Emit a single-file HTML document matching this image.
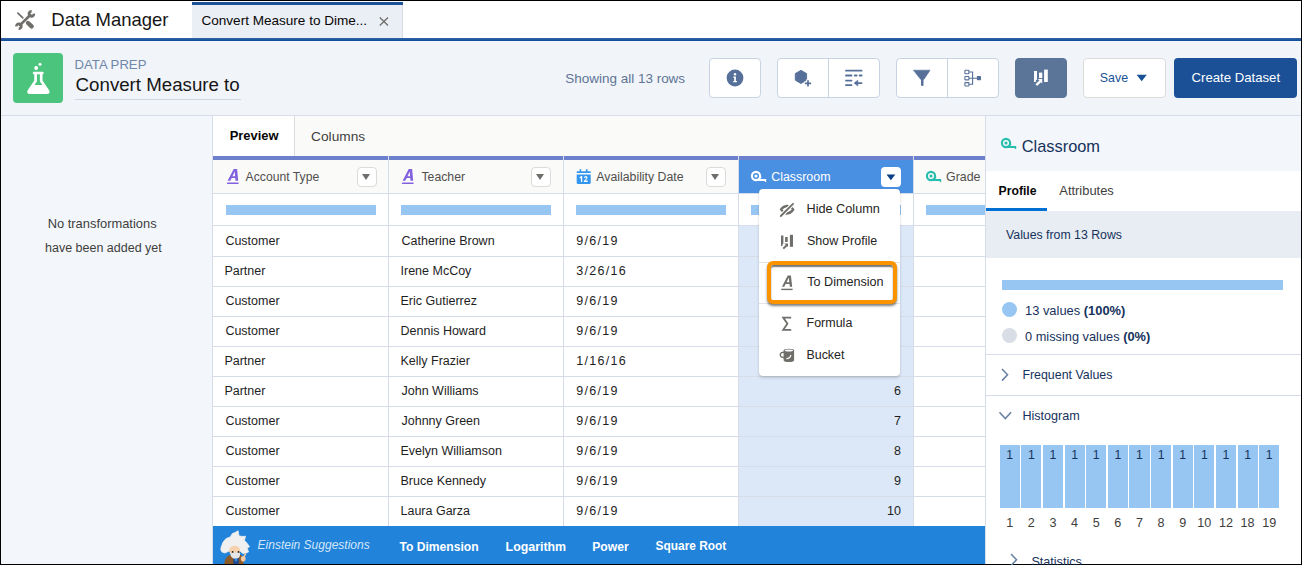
<!DOCTYPE html>
<html><head><meta charset="utf-8">
<style>
*{box-sizing:border-box;margin:0;padding:0}
html,body{width:1302px;height:565px;overflow:hidden;background:#000}
body{font-family:"Liberation Sans",sans-serif;position:relative}
.a{position:absolute}
.t{position:absolute;white-space:nowrap}
.btn{position:absolute;background:#fff;border:1px solid #c9d4e2;border-radius:4px}
.vl{position:absolute;width:1px;background:#d6dde8}
.hl{position:absolute;height:1px;background:#d6dde8}
.pbar{position:absolute;top:205px;height:10px;background:#97c6f2}
.dd{position:absolute;top:167px;width:20px;height:20px;background:#fff;border:1px solid #dddbda;border-radius:4px}
.dd:after{content:"";position:absolute;left:4px;top:6px;border-left:4.5px solid transparent;border-right:4.5px solid transparent;border-top:6px solid #706e6b}
.hb{position:absolute;top:445px;width:20.1px;height:63px;background:#97c6f2}
.hn{position:absolute;top:449px;width:20px;text-align:center;font-size:12.3px;line-height:12px;color:#16325c}
.hx{position:absolute;top:517px;width:24px;text-align:center;font-size:12.6px;line-height:12px;color:#3e3e3c}
svg{position:absolute;overflow:visible}
</style></head><body>
<div class="a" style="left:1px;top:1px;width:1300px;height:563px;background:#fff"></div>

<!-- top bar -->
<svg style="left:13px;top:8px" width="24" height="24" viewBox="0 0 24 24">
  <g stroke="#706e6b" fill="none" stroke-linecap="round">
    <line x1="4.9" y1="5.1" x2="9.8" y2="9.9" stroke-width="1.7"/>
    <line x1="15" y1="15" x2="18.6" y2="18.4" stroke-width="4.4"/>
    <line x1="7" y1="17.1" x2="17.3" y2="7" stroke-width="2.6"/>
    <path d="M20.89 5.68 A2.5 2.5 0 1 1 18.62 3.41" stroke-width="2.6" stroke-linecap="butt"/>
    <path d="M3.41 18.42 A2.5 2.5 0 1 1 5.68 20.69" stroke-width="2.6" stroke-linecap="butt"/>
  </g>
</svg>
<div class="a" style="left:192px;top:2px;width:211px;height:36px;background:#eaeef5;border-right:1px solid #d9dde3"></div>
<div class="a" style="left:192px;top:2px;width:211px;height:3px;background:#1b5297"></div>
<svg style="left:379px;top:17px" width="10" height="9" viewBox="0 0 10 9">
  <g stroke="#706e6b" stroke-width="1.3"><line x1="0.8" y1="0.5" x2="9" y2="8.5"/><line x1="9" y1="0.5" x2="0.8" y2="8.5"/></g>
</svg>
<div class="a" style="left:1px;top:38px;width:1300px;height:3px;background:linear-gradient(#3566a6,#0c4c97)"></div>

<!-- header -->
<div class="a" style="left:1px;top:41px;width:1300px;height:74px;background:#f1f4f9"></div>
<div class="hl" style="left:1px;top:115px;width:1300px;background:#d6dde8"></div>
<div class="a" style="left:13px;top:53px;width:50px;height:50px;background:#4bc47d;border-radius:4px"></div>
<svg style="left:13px;top:53px" width="50" height="50" viewBox="0 0 50 50">
  <circle cx="27" cy="11.3" r="1.5" fill="#fff"/>
  <circle cx="23.2" cy="15" r="2" fill="#fff"/>
  <rect x="19.8" y="18.8" width="10.8" height="2.4" rx="1" fill="#fff"/>
  <path d="M22.6 20.5 V28 L15.8 38 Q15 39.6 16.8 39.6 H34 Q35.8 39.6 35 38 L28.2 28 V20.5" fill="none" stroke="#fff" stroke-width="2.7" stroke-linejoin="round"/>
  <path d="M19.6 32 H31.2 L35 38 Q35.8 39.6 34 39.6 H16.8 Q15 39.6 15.8 38 Z" fill="#fff"/>
</svg>
<div class="hl" style="left:75px;top:99px;width:166px;background:#cfd6e0"></div>

<div class="btn" style="left:709px;top:58px;width:52px;height:40px"></div>
<svg style="left:726px;top:69px" width="18" height="18" viewBox="0 0 18 18">
  <circle cx="9" cy="9" r="8.4" fill="#56709a"/>
  <circle cx="9" cy="5.3" r="1.2" fill="#fff"/>
  <path d="M7.3 7.5 H9.9 V11.9 H10.9 V13.2 H7.2 V11.9 H8.2 V8.8 H7.3 Z" fill="#fff"/>
</svg>
<div class="btn" style="left:777px;top:58px;width:103px;height:40px"></div>
<div class="vl" style="left:828px;top:59px;height:38px;background:#c9d4e2"></div>
<svg style="left:790px;top:66px" width="26" height="24" viewBox="0 0 26 24">
  <path d="M10.95 4.3 L16.6 7.6 V14.2 L10.95 17.5 L5.3 14.2 V7.6 Z" fill="#56709a" stroke="#56709a" stroke-width="0.9" stroke-linejoin="round"/>
  <path d="M18 13.6 V21.2 M14.2 17.4 H21.8" stroke="#fff" stroke-width="3.6"/>
  <path d="M18 14.3 V20.5 M14.9 17.4 H21.1" stroke="#56709a" stroke-width="1.7"/>
</svg>
<svg style="left:844px;top:68px" width="20" height="20" viewBox="0 0 20 20">
  <g stroke="#56709a" stroke-width="1.8" stroke-linecap="round">
    <line x1="2" y1="2.7" x2="17.6" y2="2.7"/>
    <line x1="2" y1="7.5" x2="7.5" y2="7.5"/>
    <line x1="10.8" y1="7.5" x2="12.6" y2="7.5"/>
    <line x1="15.6" y1="7.5" x2="17.6" y2="7.5"/>
    <line x1="2" y1="12.6" x2="7.5" y2="12.6"/>
    <line x1="2" y1="17.2" x2="7.5" y2="17.2"/>
    <line x1="12" y1="15.1" x2="17.6" y2="15.1"/>
  </g>
  <path d="M10.1 15.1 L13.8 12.2 V18 Z" fill="#56709a" stroke="#56709a" stroke-width="0.6" stroke-linejoin="round"/>
</svg>
<div class="btn" style="left:896px;top:58px;width:103px;height:40px"></div>
<div class="vl" style="left:947px;top:59px;height:38px;background:#c9d4e2"></div>
<svg style="left:912px;top:69px" width="20" height="18" viewBox="0 0 20 18">
  <path d="M1.4 1.2 H18.1 L12.2 10 V10 H8.4 Z" fill="#56709a" stroke="#56709a" stroke-width="0.6" stroke-linejoin="round"/>
  <rect x="8.4" y="9" width="3.6" height="1.5" fill="#56709a"/>
  <rect x="9" y="9.5" width="2.5" height="7.3" fill="#56709a"/>
</svg>
<svg style="left:962px;top:68px" width="22" height="20" viewBox="0 0 22 20">
  <g fill="none" stroke="#56709a" stroke-width="1.1">
    <rect x="2.9" y="2.3" width="4" height="3.4" rx="0.5"/>
    <rect x="2.9" y="8.5" width="4" height="3.4" rx="0.5"/>
    <rect x="2.9" y="14.6" width="4" height="3.4" rx="0.5"/>
    <path d="M6.9 4 H10.6 V16.3 H6.9 M6.9 10.2 H15"/>
  </g>
  <rect x="14.9" y="8" width="4.1" height="4.2" rx="0.4" fill="#56709a"/>
</svg>
<div class="btn" style="left:1015px;top:58px;width:52px;height:40px;background:#5a7598;border-color:#5a7598"></div>
<svg style="left:1028px;top:65px" width="26" height="26" viewBox="0 0 26 26">
  <g fill="#fff">
    <path d="M6 6 H9 V14.5 L7.6 15.5 L8.3 16.2 L7.3 17 H6 Z"/>
    <rect x="11" y="7.6" width="3.3" height="5.5"/>
    <rect x="16.1" y="4.6" width="3.7" height="12.4"/>
  </g>
  <g stroke="#fff" stroke-width="2.4" fill="none"><line x1="8.3" y1="20.2" x2="12.4" y2="16.2"/></g>
  <path d="M9.8 14 L14.2 14 L14.2 18.4 Z" fill="#fff"/>
</svg>
<div class="btn" style="left:1083px;top:58px;width:83px;height:40px;border-color:#dddbda"></div>
<svg style="left:1136px;top:74px" width="12" height="8" viewBox="0 0 12 8"><path d="M0.6 0.8 H10.8 L5.7 7.3 Z" fill="#1b5297"/></svg>
<div class="a" style="left:1174px;top:58px;width:123px;height:40px;background:#1b5096;border-radius:4px"></div>

<!-- left panel -->
<div class="a" style="left:1px;top:116px;width:211px;height:448px;background:#f3f6fa"></div>
<div class="vl" style="left:212px;top:116px;height:448px"></div>

<!-- center -->
<div class="a" style="left:213px;top:116px;width:772px;height:40px;background:#fafaf9"></div>
<div class="a" style="left:213px;top:116px;width:81px;height:40px;background:#fff"></div>
<div class="vl" style="left:294px;top:116px;height:40px;background:#dddbda"></div>
<div class="a" style="left:213px;top:156px;width:772px;height:4px;background:#6c80cc"></div>
<div class="a" style="left:213px;top:160px;width:772px;height:33px;background:#fafaf9"></div>
<div class="a" style="left:739px;top:160px;width:174px;height:33px;background:#4a90e2"></div>
<div class="hl" style="left:213px;top:193px;width:772px"></div>
<!-- classroom column body -->
<div class="a" style="left:739px;top:226px;width:174px;height:300px;background:#dce8f8"></div>
<!-- row lines -->
<div class="hl" style="left:213px;top:225px;width:772px"></div>
<div class="hl" style="left:213px;top:256px;width:772px"></div>
<div class="hl" style="left:213px;top:286px;width:772px"></div>
<div class="hl" style="left:213px;top:316px;width:772px"></div>
<div class="hl" style="left:213px;top:346px;width:772px"></div>
<div class="hl" style="left:213px;top:376px;width:772px"></div>
<div class="hl" style="left:213px;top:406px;width:772px"></div>
<div class="hl" style="left:213px;top:436px;width:772px"></div>
<div class="hl" style="left:213px;top:466px;width:772px"></div>
<div class="hl" style="left:213px;top:496px;width:772px"></div>
<!-- column separators -->
<div class="vl" style="left:388px;top:156px;height:370px"></div>
<div class="vl" style="left:563px;top:156px;height:370px"></div>
<div class="vl" style="left:738px;top:156px;height:370px"></div>
<div class="vl" style="left:913px;top:156px;height:370px"></div>
<!-- profile bars -->
<div class="pbar" style="left:226px;width:150px"></div>
<div class="pbar" style="left:401px;width:150px"></div>
<div class="pbar" style="left:576px;width:150px"></div>
<div class="pbar" style="left:751px;width:150px"></div>
<div class="pbar" style="left:926px;width:59px"></div>
<!-- dropdown buttons -->
<div class="dd" style="left:357px"></div>
<div class="dd" style="left:531px"></div>
<div class="dd" style="left:706px"></div>
<div class="a" style="left:881px;top:167px;width:20px;height:20px;background:#fff;border-radius:4px"></div>
<svg style="left:886px;top:174px" width="10" height="7" viewBox="0 0 10 7"><path d="M0.5 0.5 H9.3 L4.9 6.2 Z" fill="#0b3f85"/></svg>
<!-- header icons -->
<svg style="left:222px;top:165px" width="20" height="23" viewBox="0 0 20 23">
  <path d="M5.6 15.8 L11.7 3.9 H15.1 L16.2 15.8 H13.5 L13.25 12.9 H9.7 L8.3 15.8 Z M10.5 11.2 H13.1 L12.7 6.6 Z" fill="#8261df" fill-rule="evenodd"/>
  <rect x="4.9" y="17.4" width="11.8" height="1.5" rx="0.6" fill="#8261df"/>
</svg>
<svg style="left:397px;top:165px" width="20" height="23" viewBox="0 0 20 23">
  <path d="M5.6 15.8 L11.7 3.9 H15.1 L16.2 15.8 H13.5 L13.25 12.9 H9.7 L8.3 15.8 Z M10.5 11.2 H13.1 L12.7 6.6 Z" fill="#8261df" fill-rule="evenodd"/>
  <rect x="4.9" y="17.4" width="11.8" height="1.5" rx="0.6" fill="#8261df"/>
</svg>
<svg style="left:572px;top:164px" width="24" height="24" viewBox="0 0 24 24">
  <g fill="#3396ee">
    <rect x="4.7" y="7.2" width="14" height="1.8" rx="0.5"/>
    <rect x="7.6" y="5.2" width="1.6" height="3"/>
    <rect x="13.9" y="5.2" width="1.6" height="3"/>
    <path d="M4.7 10.6 H18.7 V18.8 Q18.7 20 17.5 20 H5.9 Q4.7 20 4.7 18.8 Z"/>
  </g>
  <g fill="#fff">
    <path d="M7.5 13.3 L9.3 12.1 H10.2 V18 H8.9 V13.9 L8 14.4 Z"/>
    <path d="M11.9 13.8 Q12.2 12 13.8 12 Q15.5 12 15.5 13.7 Q15.5 14.8 13.9 16.1 L13.4 16.6 H15.6 V18 H11.8 V16.9 L13.5 15.3 Q14.2 14.6 14.2 13.9 Q14.2 13.3 13.7 13.3 Q13.2 13.3 13.1 14.1 Z"/>
  </g>
</svg>
<svg style="left:745px;top:165px" width="25" height="23" viewBox="0 0 25 23">
  <circle cx="11" cy="11" r="4.1" fill="none" stroke="#fff" stroke-width="2.1"/>
  <circle cx="11" cy="11" r="1.55" fill="#fff"/>
  <path d="M14.6 9.2 Q16.5 10.5 16.2 12.2 L15 14.2 Z" fill="#fff"/>
  <path d="M11 13.9 H21.2 V16.9 H19.8 V15.9 H11 Z" fill="#fff"/>
</svg>
<svg style="left:920px;top:165px" width="25" height="23" viewBox="0 0 25 23">
  <circle cx="11" cy="11" r="4.1" fill="none" stroke="#26bdae" stroke-width="2.1"/>
  <circle cx="11" cy="11" r="1.55" fill="#26bdae"/>
  <path d="M14.6 9.2 Q16.5 10.5 16.2 12.2 L15 14.2 Z" fill="#26bdae"/>
  <path d="M11 13.9 H21.2 V16.9 H19.8 V15.9 H11 Z" fill="#26bdae"/>
</svg>

<!-- einstein bar -->
<div class="a" style="left:213px;top:526px;width:772px;height:38px;background:#2183d9"></div>
<svg style="left:218px;top:528px" width="34" height="36" viewBox="0 0 34 36">
  <path d="M2.8 21.5 Q3 18.5 4 17 Q4.5 14.5 6 13 Q7 11 8.5 10.5 Q10.5 9.2 12.5 9 Q13 7 14.5 5.5 Q17 4.8 20.1 2.8 Q20.6 5.5 21 8 Q23 8.2 25 8.5 Q26.3 8.2 27.5 8.3 Q26.8 10.5 26.5 12.5 Q29.5 15.5 31.5 18.7 Q30 19.5 29 20 Q30 22 30.5 24 Q28 25 25 25.6 L22 23 H11 L7 25 Q5.5 24.5 4 24 Q3 22.5 2.8 21.5 Z" fill="#f0f0f0" stroke="#f0f0f0" stroke-width="0.8" stroke-linejoin="round"/>
  <path d="M6.3 36 Q6.8 28.5 12 27 L23 27 Q25.6 28.5 25.6 36 Z" fill="#8b5a2b"/>
  <rect x="15.3" y="29" width="5.5" height="7" fill="#1d4c94"/>
  <ellipse cx="16.6" cy="22.6" rx="5.6" ry="4.8" fill="#f6d1ad"/>
  <path d="M12.3 25 Q17 23.6 22.2 25 Q22.4 30.8 17.4 30.8 Q12.6 30.8 12.3 25 Z" fill="#e6e6e6"/>
  <rect x="17.3" y="30.2" width="1.6" height="3" fill="#4aa6ec"/>
  <circle cx="14.6" cy="23.9" r="0.95" fill="#222"/><circle cx="20.5" cy="23.9" r="0.95" fill="#222"/>
  <ellipse cx="25.2" cy="30.8" rx="2.4" ry="2.8" fill="#f6caa0"/>
  <path d="M25.8 29 L27.6 25.8" stroke="#f6caa0" stroke-width="1.5" stroke-linecap="round"/>
</svg>

<!-- popup -->
<div class="a" style="left:759px;top:189px;width:141px;height:187px;background:#fff;border-radius:4px;box-shadow:0 2px 3px rgba(0,0,0,.16),0 0 1px rgba(0,0,0,.15)"></div>
<div class="hl" style="left:759px;top:262px;width:141px;background:#e5e5e5"></div>
<div class="hl" style="left:759px;top:303px;width:141px;background:#e5e5e5"></div>
<div class="a" style="left:767px;top:261px;width:130px;height:43px;border:4px solid #fb9300;border-radius:6px;box-shadow:inset 0 2px 1.5px rgba(0,0,0,.55),0 2px 2.5px rgba(0,0,0,.5);background:#fff"></div>
<svg style="left:775px;top:198px" width="25" height="24" viewBox="0 0 25 24">
  <g fill="none" stroke="#706e6b" stroke-linecap="round">
    <path d="M12.8 8 Q8.4 8 6.1 11.5 Q6.8 12.7 8.1 13.5" stroke-width="2.3"/>
    <path d="M10.9 15.5 Q15.6 15.5 18.2 11.5 Q17.5 10.4 16.4 9.6" stroke-width="2.3"/>
    <line x1="5.8" y1="18" x2="18" y2="5.8" stroke-width="4" stroke="#fff"/><line x1="5.8" y1="18" x2="18" y2="5.8" stroke-width="1.8"/>
  </g>
</svg>
<svg style="left:775px;top:230px" width="25" height="24" viewBox="0 0 25 24">
  <g fill="#706e6b">
    <path d="M6 5.6 H8.4 V13.5 L7.3 14.3 L7.9 15 L7.1 15.9 H6 Z"/>
    <rect x="10.1" y="7" width="2.6" height="5"/>
    <rect x="14.9" y="4.8" width="3.1" height="12"/>
  </g>
  <line x1="8.3" y1="18.6" x2="11.7" y2="15.2" stroke="#706e6b" stroke-width="2"/>
  <path d="M9.4 13.4 L13 13.4 L13 17 Z" fill="#706e6b"/>
</svg>
<svg style="left:775px;top:270px" width="22" height="24" viewBox="0 0 22 24">
  <path d="M7 16.8 L12.7 5.4 H15.9 L17.2 16.8 H14.8 L14.5 14.1 H10.6 L9.3 16.8 Z M11.6 12.2 H14.3 L13.8 7.4 Z" fill="#706e6b" fill-rule="evenodd"/>
  <rect x="6.2" y="18.7" width="11.4" height="1.4" fill="#706e6b"/>
</svg>
<svg style="left:775px;top:312px" width="22" height="22" viewBox="0 0 22 22">
  <path d="M16.2 5.6 H8.2 L12.4 11.7 L8.2 17.8 H16.2" fill="none" stroke="#706e6b" stroke-width="1.8" stroke-linejoin="miter"/>
</svg>
<svg style="left:775px;top:345px" width="22" height="20" viewBox="0 0 22 20">
  <path d="M8.6 5.4 Q8.6 3.7 13.85 3.7 Q19.1 3.7 19.1 5.4 V15.3 Q19.1 17.1 13.85 17.1 Q8.6 17.1 8.6 15.3 Z" fill="#706e6b"/>
  <ellipse cx="13.85" cy="5.5" rx="4.1" ry="1.1" fill="#fff"/>
  <path d="M10.4 7.3 Q5.1 6.6 5.3 10 Q5.6 13.2 10.5 12.4 L12.8 11.6" fill="none" stroke="#706e6b" stroke-width="1.4"/>
  <path d="M11.3 13.8 Q15 13.6 16 10" fill="none" stroke="#fff" stroke-width="1.1"/>
</svg>

<!-- right panel -->
<div class="vl" style="left:985px;top:116px;height:448px"></div>
<div class="a" style="left:986px;top:116px;width:315px;height:55px;background:#f3f6fa"></div>
<svg style="left:995px;top:132px" width="25" height="23" viewBox="0 0 25 23">
  <circle cx="11" cy="11" r="4.1" fill="none" stroke="#26bdae" stroke-width="2.1"/>
  <circle cx="11" cy="11" r="1.55" fill="#26bdae"/>
  <path d="M14.6 9.2 Q16.5 10.5 16.2 12.2 L15 14.2 Z" fill="#26bdae"/>
  <path d="M11 13.9 H21.2 V16.9 H19.8 V15.9 H11 Z" fill="#26bdae"/>
</svg>
<div class="a" style="left:986px;top:171px;width:315px;height:40px;background:#fff"></div>
<div class="a" style="left:986px;top:208px;width:61px;height:3px;background:#0070d2"></div>
<div class="a" style="left:986px;top:211px;width:315px;height:47px;background:#e8edf3"></div>
<div class="a" style="left:1002px;top:280px;width:281px;height:10px;background:#97c6f2"></div>
<div class="a" style="left:1002px;top:302px;width:15px;height:15px;border-radius:50%;background:#97c6f2"></div>
<div class="a" style="left:1002px;top:328px;width:15px;height:15px;border-radius:50%;background:#d8dde6"></div>
<div class="t" style="left:1025px;top:304px;font-size:12.9px;line-height:14px;color:#16325c">13 values <b>(100%)</b></div>
<div class="t" style="left:1025px;top:330px;font-size:12.8px;line-height:14px;color:#16325c">0 missing values <b>(0%)</b></div>
<div class="hl" style="left:986px;top:354px;width:315px"></div>
<div class="hl" style="left:986px;top:395px;width:315px"></div>
<svg style="left:998px;top:366px" width="14" height="18" viewBox="0 0 14 18"><path d="M4 3 L9.5 8.8 L4 14.6" fill="none" stroke="#6b83a6" stroke-width="1.6"/></svg>
<svg style="left:998px;top:408px" width="16" height="14" viewBox="0 0 16 14"><path d="M1.5 4.3 L7.3 10.6 L13.1 4.3" fill="none" stroke="#6b83a6" stroke-width="1.6"/></svg>
<svg style="left:1008px;top:551px" width="14" height="18" viewBox="0 0 14 18"><path d="M3 3 L8.5 8.8 L3 14.6" fill="none" stroke="#6b83a6" stroke-width="1.6"/></svg>
<div class="hb" style="left:999.70px"></div>
<div class="hn" style="left:999.75px">1</div>
<div class="hx" style="left:997.75px">1</div>
<div class="hb" style="left:1021.32px"></div>
<div class="hn" style="left:1021.37px">1</div>
<div class="hx" style="left:1019.37px">2</div>
<div class="hb" style="left:1042.94px"></div>
<div class="hn" style="left:1042.99px">1</div>
<div class="hx" style="left:1040.99px">3</div>
<div class="hb" style="left:1064.56px"></div>
<div class="hn" style="left:1064.61px">1</div>
<div class="hx" style="left:1062.61px">4</div>
<div class="hb" style="left:1086.18px"></div>
<div class="hn" style="left:1086.23px">1</div>
<div class="hx" style="left:1084.23px">5</div>
<div class="hb" style="left:1107.80px"></div>
<div class="hn" style="left:1107.85px">1</div>
<div class="hx" style="left:1105.85px">6</div>
<div class="hb" style="left:1129.42px"></div>
<div class="hn" style="left:1129.47px">1</div>
<div class="hx" style="left:1127.47px">7</div>
<div class="hb" style="left:1151.04px"></div>
<div class="hn" style="left:1151.09px">1</div>
<div class="hx" style="left:1149.09px">8</div>
<div class="hb" style="left:1172.66px"></div>
<div class="hn" style="left:1172.71px">1</div>
<div class="hx" style="left:1170.71px">9</div>
<div class="hb" style="left:1194.28px"></div>
<div class="hn" style="left:1194.33px">1</div>
<div class="hx" style="left:1192.33px">10</div>
<div class="hb" style="left:1215.90px"></div>
<div class="hn" style="left:1215.95px">1</div>
<div class="hx" style="left:1213.95px">12</div>
<div class="hb" style="left:1237.52px"></div>
<div class="hn" style="left:1237.57px">1</div>
<div class="hx" style="left:1235.57px">18</div>
<div class="hb" style="left:1259.14px"></div>
<div class="hn" style="left:1259.19px">1</div>
<div class="hx" style="left:1257.19px">19</div>

<div class="t" style="left:51.30px;top:10.73px;font-size:18.5px;line-height:18.5px;color:#161616">Data Manager</div>
<div class="t" style="left:201.50px;top:14.32px;font-size:13.56px;line-height:13.56px;color:#080707">Convert Measure to Dime...</div>
<div class="t" style="left:74.60px;top:58.46px;font-size:13.15px;line-height:13.15px;color:#6f87a8">DATA PREP</div>
<div class="t" style="left:75.60px;top:75.76px;font-size:18.7px;line-height:18.7px;color:#161616">Convert Measure to</div>
<div class="t" style="left:565.30px;top:72.09px;font-size:13.48px;line-height:13.48px;color:#607595">Showing all 13 rows</div>
<div class="t" style="left:1099.80px;top:72.00px;font-size:12.4px;line-height:12.4px;color:#1b5297">Save</div>
<div class="t" style="left:1191.50px;top:71.44px;font-size:13.18px;line-height:13.18px;color:#ffffff">Create Dataset</div>
<div class="t" style="left:47.70px;top:217.58px;font-size:12.9px;line-height:12.9px;color:#3e3e3c">No transformations</div>
<div class="t" style="left:45.00px;top:241.91px;font-size:12.5px;line-height:12.5px;color:#3e3e3c">have been added yet</div>
<div class="t" style="left:229.70px;top:130.13px;font-size:12.95px;line-height:12.95px;color:#080707;font-weight:bold">Preview</div>
<div class="t" style="left:311.10px;top:129.50px;font-size:13.7px;line-height:13.7px;color:#3e3e3c">Columns</div>
<div class="t" style="left:245.60px;top:171.17px;font-size:12.2px;line-height:12.2px;color:#514f4d">Account Type</div>
<div class="t" style="left:421.50px;top:171.12px;font-size:12.26px;line-height:12.26px;color:#514f4d">Teacher</div>
<div class="t" style="left:596.30px;top:171.08px;font-size:12.3px;line-height:12.3px;color:#514f4d">Availability Date</div>
<div class="t" style="left:771.20px;top:171.19px;font-size:12.41px;line-height:12.41px;color:#ffffff">Classroom</div>
<div class="t" style="left:946.00px;top:171.20px;font-size:12.4px;line-height:12.4px;color:#514f4d">Grade</div>
<div class="t" style="left:225.40px;top:235.11px;font-size:12.5px;line-height:12.5px;color:#1e1e1e">Customer</div>
<div class="t" style="left:401.50px;top:235.11px;font-size:12.5px;line-height:12.5px;color:#1e1e1e">Catherine Brown</div>
<div class="t" style="left:576.30px;top:235.11px;font-size:12.5px;line-height:12.5px;color:#1e1e1e;letter-spacing:1.3px">9/6/19</div>
<div class="t" style="left:224.40px;top:265.12px;font-size:12.5px;line-height:12.5px;color:#1e1e1e">Partner</div>
<div class="t" style="left:400.50px;top:265.12px;font-size:12.5px;line-height:12.5px;color:#1e1e1e">Irene McCoy</div>
<div class="t" style="left:576.30px;top:265.12px;font-size:12.5px;line-height:12.5px;color:#1e1e1e;letter-spacing:1.3px">3/26/16</div>
<div class="t" style="left:225.40px;top:295.12px;font-size:12.5px;line-height:12.5px;color:#1e1e1e">Customer</div>
<div class="t" style="left:400.50px;top:295.12px;font-size:12.5px;line-height:12.5px;color:#1e1e1e">Eric Gutierrez</div>
<div class="t" style="left:576.30px;top:295.12px;font-size:12.5px;line-height:12.5px;color:#1e1e1e;letter-spacing:1.3px">9/6/19</div>
<div class="t" style="left:225.40px;top:325.12px;font-size:12.5px;line-height:12.5px;color:#1e1e1e">Customer</div>
<div class="t" style="left:400.50px;top:325.12px;font-size:12.5px;line-height:12.5px;color:#1e1e1e">Dennis Howard</div>
<div class="t" style="left:576.30px;top:325.12px;font-size:12.5px;line-height:12.5px;color:#1e1e1e;letter-spacing:1.3px">9/6/19</div>
<div class="t" style="left:224.40px;top:355.12px;font-size:12.5px;line-height:12.5px;color:#1e1e1e">Partner</div>
<div class="t" style="left:400.50px;top:355.12px;font-size:12.5px;line-height:12.5px;color:#1e1e1e">Kelly Frazier</div>
<div class="t" style="left:576.30px;top:355.12px;font-size:12.5px;line-height:12.5px;color:#1e1e1e;letter-spacing:1.3px">1/16/16</div>
<div class="t" style="left:224.40px;top:385.12px;font-size:12.5px;line-height:12.5px;color:#1e1e1e">Partner</div>
<div class="t" style="left:401.50px;top:385.12px;font-size:12.5px;line-height:12.5px;color:#1e1e1e">John Williams</div>
<div class="t" style="left:576.30px;top:385.12px;font-size:12.5px;line-height:12.5px;color:#1e1e1e;letter-spacing:1.3px">9/6/19</div>
<div class="t" style="left:225.40px;top:415.12px;font-size:12.5px;line-height:12.5px;color:#1e1e1e">Customer</div>
<div class="t" style="left:401.50px;top:415.12px;font-size:12.5px;line-height:12.5px;color:#1e1e1e">Johnny Green</div>
<div class="t" style="left:576.30px;top:415.12px;font-size:12.5px;line-height:12.5px;color:#1e1e1e;letter-spacing:1.3px">9/6/19</div>
<div class="t" style="left:225.40px;top:445.12px;font-size:12.5px;line-height:12.5px;color:#1e1e1e">Customer</div>
<div class="t" style="left:400.50px;top:445.12px;font-size:12.5px;line-height:12.5px;color:#1e1e1e">Evelyn Williamson</div>
<div class="t" style="left:576.30px;top:445.12px;font-size:12.5px;line-height:12.5px;color:#1e1e1e;letter-spacing:1.3px">9/6/19</div>
<div class="t" style="left:225.40px;top:475.12px;font-size:12.5px;line-height:12.5px;color:#1e1e1e">Customer</div>
<div class="t" style="left:400.50px;top:475.12px;font-size:12.5px;line-height:12.5px;color:#1e1e1e">Bruce Kennedy</div>
<div class="t" style="left:576.30px;top:475.12px;font-size:12.5px;line-height:12.5px;color:#1e1e1e;letter-spacing:1.3px">9/6/19</div>
<div class="t" style="left:225.40px;top:505.12px;font-size:12.5px;line-height:12.5px;color:#1e1e1e">Customer</div>
<div class="t" style="left:400.50px;top:505.12px;font-size:12.5px;line-height:12.5px;color:#1e1e1e">Laura Garza</div>
<div class="t" style="left:576.30px;top:505.12px;font-size:12.5px;line-height:12.5px;color:#1e1e1e;letter-spacing:1.3px">9/6/19</div>
<div class="t" style="left:893.90px;top:385.12px;font-size:12.5px;line-height:12.5px;color:#1e1e1e">6</div>
<div class="t" style="left:893.90px;top:415.12px;font-size:12.5px;line-height:12.5px;color:#1e1e1e">7</div>
<div class="t" style="left:893.90px;top:445.12px;font-size:12.5px;line-height:12.5px;color:#1e1e1e">8</div>
<div class="t" style="left:893.90px;top:475.12px;font-size:12.5px;line-height:12.5px;color:#1e1e1e">9</div>
<div class="t" style="left:886.95px;top:505.12px;font-size:12.5px;line-height:12.5px;color:#1e1e1e">10</div>
<div class="t" style="left:806.50px;top:202.75px;font-size:12.7px;line-height:12.7px;color:#262422">Hide Column</div>
<div class="t" style="left:807.00px;top:235.11px;font-size:12.5px;line-height:12.5px;color:#262422">Show Profile</div>
<div class="t" style="left:807.30px;top:275.63px;font-size:12.6px;line-height:12.6px;color:#262422">To Dimension</div>
<div class="t" style="left:806.50px;top:317.12px;font-size:12.5px;line-height:12.5px;color:#262422">Formula</div>
<div class="t" style="left:806.50px;top:349.00px;font-size:12.4px;line-height:12.4px;color:#262422">Bucket</div>
<div class="t" style="left:1021.70px;top:138.11px;font-size:16.4px;line-height:16.4px;color:#16325c">Classroom</div>
<div class="t" style="left:998.60px;top:185.17px;font-size:12.2px;line-height:12.2px;color:#080707;font-weight:bold">Profile</div>
<div class="t" style="left:1059.30px;top:184.58px;font-size:12.9px;line-height:12.9px;color:#3e3e3c">Attributes</div>
<div class="t" style="left:1006.00px;top:228.98px;font-size:12.3px;line-height:12.3px;color:#16325c">Values from 13 Rows</div>
<div class="t" style="left:1022.40px;top:369.40px;font-size:12.4px;line-height:12.4px;color:#16325c">Frequent Values</div>
<div class="t" style="left:1022.40px;top:410.23px;font-size:12.6px;line-height:12.6px;color:#16325c">Histogram</div>
<div class="t" style="left:1031.40px;top:555.83px;font-size:12.6px;line-height:12.6px;color:#16325c">Statistics</div>
<div class="t" style="left:257.60px;top:539.34px;font-size:12.0px;line-height:12.0px;color:#d4e6fa;font-style:italic">Einstein Suggestions</div>
<div class="t" style="left:399.40px;top:540.72px;font-size:12.14px;line-height:12.14px;color:#ffffff;font-weight:bold">To Dimension</div>
<div class="t" style="left:505.60px;top:540.51px;font-size:12.39px;line-height:12.39px;color:#ffffff;font-weight:bold">Logarithm</div>
<div class="t" style="left:592.20px;top:540.69px;font-size:12.18px;line-height:12.18px;color:#ffffff;font-weight:bold">Power</div>
<div class="t" style="left:655.60px;top:540.92px;font-size:11.9px;line-height:11.9px;color:#ffffff;font-weight:bold">Square Root</div>
</body></html>
